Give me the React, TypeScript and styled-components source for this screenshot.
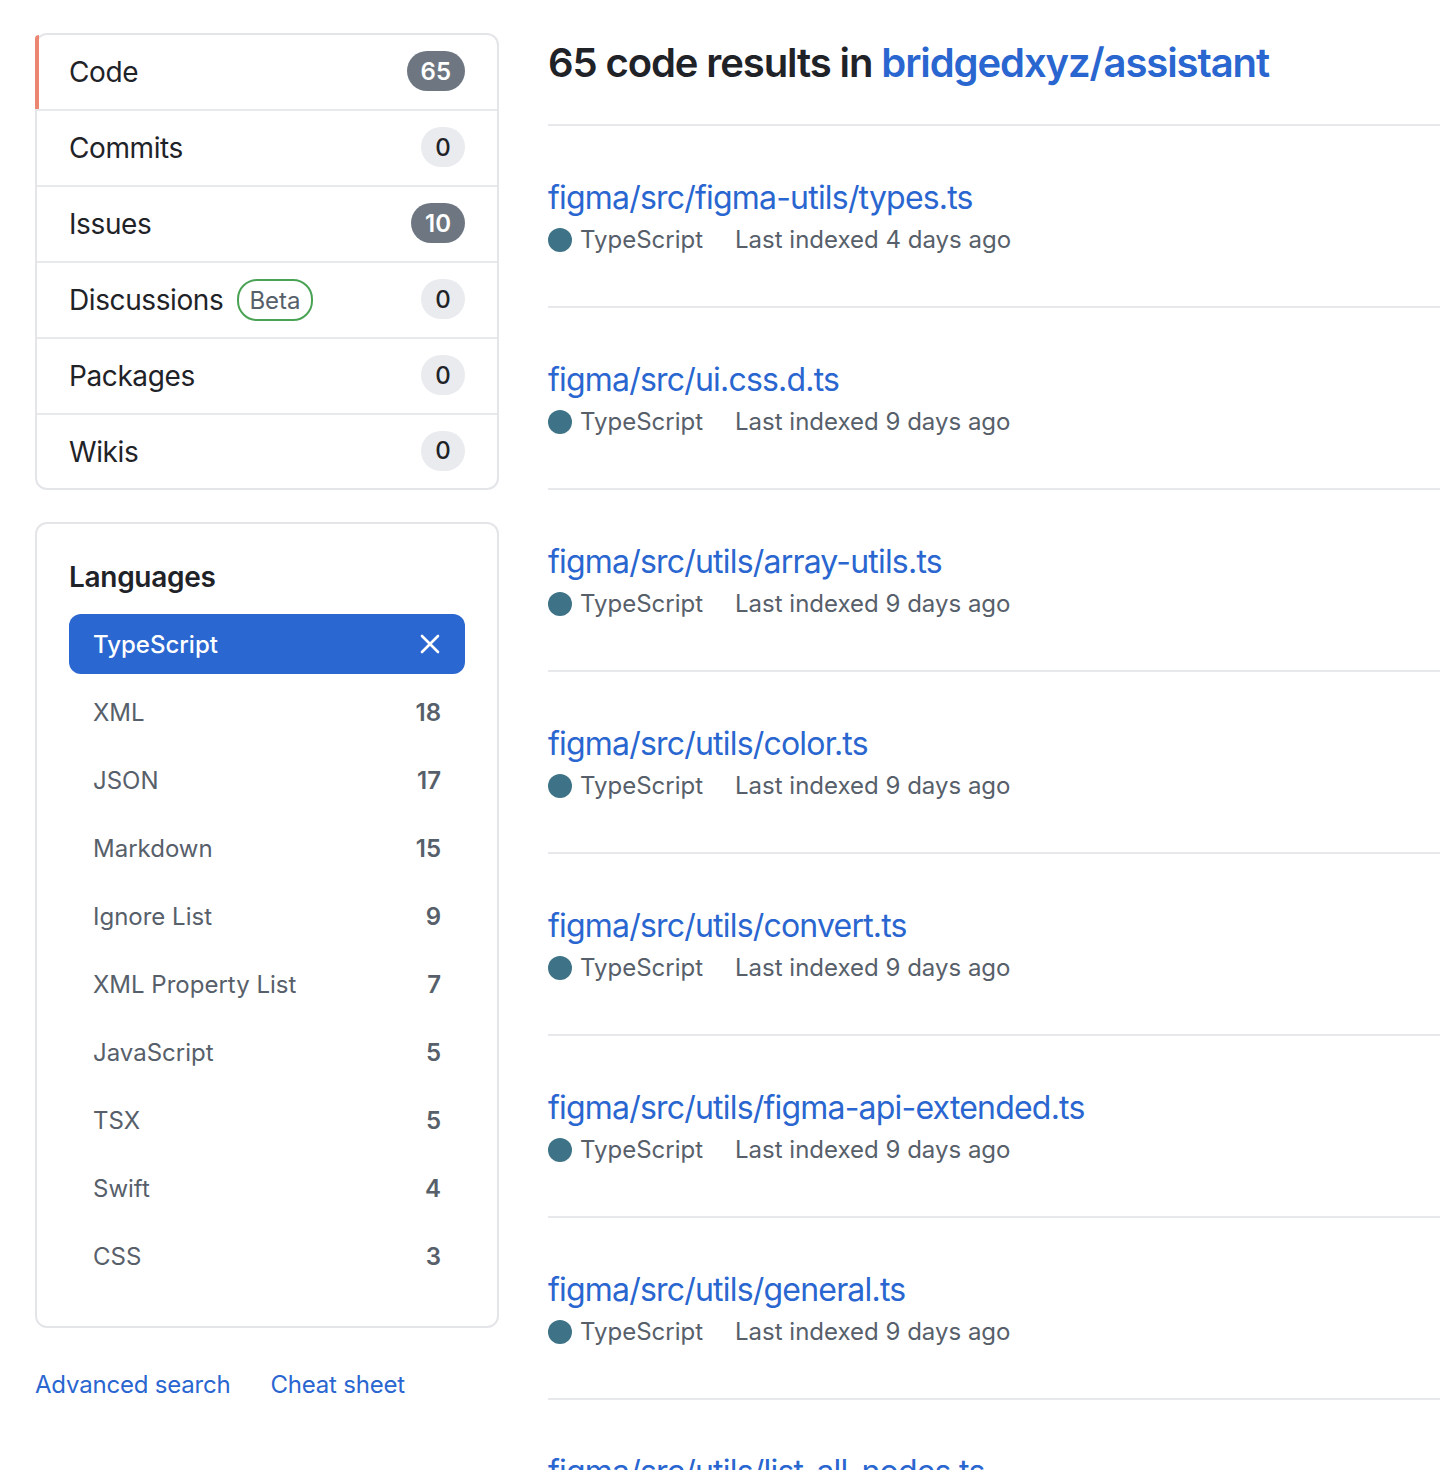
import React from 'react';
import styled, { createGlobalStyle } from 'styled-components';

const GlobalStyle = createGlobalStyle`
  body {
    margin: 0;
    background: #ffffff;
    font-family: Inter, "Noto Sans", "Liberation Sans", sans-serif;
    color: #24292f;
  }
`;

const navItems = [
  { label: 'Code', count: 65, selected: true },
  { label: 'Commits', count: 0 },
  { label: 'Issues', count: 10 },
  { label: 'Discussions', count: 0, beta: true },
  { label: 'Packages', count: 0 },
  { label: 'Wikis', count: 0 },
];

const languages = [
  { name: 'XML', count: 18 },
  { name: 'JSON', count: 17 },
  { name: 'Markdown', count: 15 },
  { name: 'Ignore List', count: 9 },
  { name: 'XML Property List', count: 7 },
  { name: 'JavaScript', count: 5 },
  { name: 'TSX', count: 5 },
  { name: 'Swift', count: 4 },
  { name: 'CSS', count: 3 },
];

const results = [
  { path: 'figma/src/figma-utils/types.ts', indexed: '4 days ago' },
  { path: 'figma/src/ui.css.d.ts', indexed: '9 days ago' },
  { path: 'figma/src/utils/array-utils.ts', indexed: '9 days ago' },
  { path: 'figma/src/utils/color.ts', indexed: '9 days ago' },
  { path: 'figma/src/utils/convert.ts', indexed: '9 days ago' },
  { path: 'figma/src/utils/figma-api-extended.ts', indexed: '9 days ago' },
  { path: 'figma/src/utils/general.ts', indexed: '9 days ago' },
  { path: 'figma/src/utils/list-all-nodes.ts', indexed: '9 days ago' },
];

function CloseIcon() {
  return (
    <svg width="22" height="22" viewBox="0 0 22 22" fill="none">
      <path
        d="M3 3L19 19M19 3L3 19"
        stroke="#ffffff"
        strokeWidth="2.6"
        strokeLinecap="round"
      />
    </svg>
  );
}

export default function App() {
  return (
    <>
      <GlobalStyle />
      <Page>
        <Sidebar>
          <NavBox>
            {navItems.map(item => (
              <NavItem key={item.label} $selected={item.selected}>
                <NavLabel>
                  {item.label}
                  {item.beta && <BetaLabel>Beta</BetaLabel>}
                </NavLabel>
                <Counter $dark={item.count > 0}>{item.count}</Counter>
              </NavItem>
            ))}
          </NavBox>

          <FilterBox>
            <FilterTitle>Languages</FilterTitle>
            <LangList>
              <LangItem $selected>
                <span>TypeScript</span>
                <CloseIcon />
              </LangItem>
              {languages.map(lang => (
                <LangItem key={lang.name}>
                  <span>{lang.name}</span>
                  <LangCount>{lang.count}</LangCount>
                </LangItem>
              ))}
            </LangList>
          </FilterBox>

          <FooterLinks>
            <Link>Advanced search</Link>
            <Link>Cheat sheet</Link>
          </FooterLinks>
        </Sidebar>

        <Main>
          <Heading>
            65 code results in <HeadingLink>bridgedxyz/assistant</HeadingLink>
          </Heading>
          <ResultList>
            {results.map(r => (
              <Result key={r.path}>
                <ResultTitle>{r.path}</ResultTitle>
                <Meta>
                  <LangDot />
                  <MetaLang>TypeScript</MetaLang>
                  <span>Last indexed {r.indexed}</span>
                </Meta>
              </Result>
            ))}
          </ResultList>
        </Main>
      </Page>
    </>
  );
}

const Page = styled.div`
  display: flex;
  gap: 49px;
  padding: 33px 0 0 35px;
  height: 1470px;
  box-sizing: border-box;
  overflow: hidden;
`;

const Sidebar = styled.div`
  width: 464px;
  flex-shrink: 0;
  display: flex;
  flex-direction: column;
`;

const NavBox = styled.div`
  border: 2px solid #e3e5e9;
  border-radius: 12px;
`;

const NavItem = styled.div<{ $selected?: boolean }>`
  position: relative;
  height: 74px;
  padding: 0 32px;
  display: flex;
  align-items: center;
  justify-content: space-between;
  border-bottom: 2px solid #e8e9ed;

  &:last-child {
    border-bottom: none;
    height: 73px;
  }

  &::before {
    content: '';
    display: ${p => (p.$selected ? 'block' : 'none')};
    position: absolute;
    left: -2px;
    top: 0;
    bottom: 0;
    width: 4px;
    background: #ea8672;
    border-top-left-radius: 10px;
  }
`;

const NavLabel = styled.span`
  display: flex;
  align-items: center;
  font-size: 28px;
  color: #1f2328;
  letter-spacing: -0.4px;
`;

const BetaLabel = styled.span`
  margin-left: 14px;
  height: 38px;
  padding: 0 10px;
  border: 2px solid #4aa355;
  border-radius: 20px;
  display: inline-flex;
  align-items: center;
  font-size: 24px;
  color: #57606a;
  letter-spacing: 0;
`;

const Counter = styled.span<{ $dark?: boolean }>`
  min-width: 44px;
  height: 40px;
  padding: 0 14px;
  box-sizing: border-box;
  border-radius: 20px;
  display: inline-flex;
  align-items: center;
  justify-content: center;
  font-size: 24px;
  font-weight: ${p => (p.$dark ? 600 : 500)};
  background: ${p => (p.$dark ? '#6e7781' : '#eaebee')};
  color: ${p => (p.$dark ? '#ffffff' : '#1f2328')};
  margin-top: -2px;
`;

const FilterBox = styled.div`
  margin-top: 32px;
  border: 2px solid #e3e5e9;
  border-radius: 12px;
  padding: 32px 32px 40px;
`;

const FilterTitle = styled.h3`
  margin: 0 0 16px;
  font-size: 28px;
  line-height: 42px;
  font-weight: 600;
  color: #1f2328;
  letter-spacing: -0.3px;
`;

const LangList = styled.div`
  display: flex;
  flex-direction: column;
  gap: 8px;
`;

const LangItem = styled.div<{ $selected?: boolean }>`
  height: 60px;
  padding: 0 24px;
  border-radius: 12px;
  display: flex;
  align-items: center;
  justify-content: space-between;
  font-size: 24px;
  color: ${p => (p.$selected ? '#ffffff' : '#57606a')};
  background: ${p => (p.$selected ? '#2a67d0' : 'transparent')};
  font-weight: ${p => (p.$selected ? 500 : 400)};
`;

const LangCount = styled.span`
  font-weight: 600;
  color: #57606a;
`;

const FooterLinks = styled.div`
  margin-top: 39px;
  display: flex;
  gap: 40px;
`;

const Link = styled.a`
  font-size: 24px;
  line-height: 36px;
  color: #2a66d0;
  cursor: pointer;
  letter-spacing: -0.2px;
`;

const Main = styled.div`
  flex: 1;
  min-width: 0;
`;

const Heading = styled.h1`
  margin: 0 0 31px;
  font-size: 40px;
  line-height: 60px;
  font-weight: 600;
  color: #1f2328;
  letter-spacing: -1.1px;
`;

const HeadingLink = styled.span`
  color: #2a66d0;
`;

const ResultList = styled.div`
  display: flex;
  flex-direction: column;
`;

const Result = styled.div`
  border-top: 2px solid #e7e8eb;
  padding: 48px 0;
`;

const ResultTitle = styled.a`
  display: block;
  font-size: 32px;
  line-height: 48px;
  color: #2a66d0;
  cursor: pointer;
  letter-spacing: -0.8px;
`;

const Meta = styled.div`
  display: flex;
  align-items: center;
  font-size: 24px;
  line-height: 36px;
  color: #57606a;
`;

const LangDot = styled.span`
  width: 24px;
  height: 24px;
  border-radius: 50%;
  background: #3e7387;
  margin-right: 8px;
`;

const MetaLang = styled.span`
  margin-right: 32px;
`;
